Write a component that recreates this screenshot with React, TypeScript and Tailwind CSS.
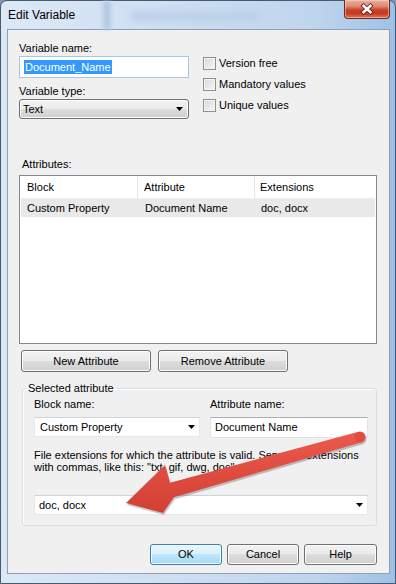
import React from "react";

const Arrow = () => (
  <svg width="7" height="4" viewBox="0 0 7 4" className="block">
    <polygon points="0,0 7,0 3.5,4" fill="#000" />
  </svg>
);

const Check = ({ label }: { label: string }) => (
  <div className="h-[21px] flex items-center">
    <div className="w-[13px] h-[13px] border border-[#8e8f8f] bg-[linear-gradient(135deg,#d8d8d8,#f7f7f7)] shadow-[inset_0_0_0_1px_#f4f4f4]" />
    <span className="ml-[3px]">{label}</span>
  </div>
);

const btn =
  "h-[22px] flex items-center justify-center rounded-[3px] border border-[#707070] bg-[linear-gradient(#f2f2f2,#ebebeb_50%,#dddddd_50%,#cfcfcf)] shadow-[inset_0_0_0_1px_#fcfcfc]";

export default function App() {
  return (
    <div className="w-[396px] h-[584px] relative overflow-hidden bg-[#7f98b8] font-['Liberation_Sans',Arial,sans-serif] text-[11px] text-black">
      <div className="w-full h-full rounded-t-[7px] border border-[#4a5a6e] bg-[linear-gradient(90deg,#dce8f6_0%,#cddff2_45%,#bfd5ee_80%,#9fc0e5_100%)] flex flex-col">
        <div className="h-[28px] relative flex items-center pl-[7px] shrink-0">
          <div className="absolute left-[102px] top-0 w-[8px] h-[28px] bg-[#b2c9e3] blur-[2px]" />
          <div className="absolute left-[130px] top-[10px] w-[130px] h-[11px] bg-[#bdd1e9] blur-[3px]" />
          <span className="relative text-[12px] leading-none text-black">Edit Variable</span>
          <div className="absolute right-[5px] top-[-1px] w-[46px] h-[19px] rounded-b-[4px] border border-t-0 border-[#6d2a1e] bg-[linear-gradient(#eab1a2,#de8a73_35%,#c8432b_55%,#c53a22_75%,#dc7a5c)] shadow-[inset_0_0_0_1px_rgba(255,220,200,0.5)] flex items-center justify-center">
            <svg width="14" height="12" viewBox="0 0 14 12">
              <path d="M2 1.5 L12 10.5 M12 1.5 L2 10.5" stroke="#5a1a10" strokeWidth="4.2" strokeLinecap="butt" />
              <path d="M2.6 2 L11.4 10 M11.4 2 L2.6 10" stroke="#ffffff" strokeWidth="2.6" strokeLinecap="butt" />
            </svg>
          </div>
        </div>
        <div className="flex-1 ml-[6px] mr-[5px] mb-[9px] border border-[#8ea0b8] bg-[#f0f0f0] pl-[11px] pr-[12px] pt-[11px] flex flex-col">
          <div className="flex">
            <div className="w-[170px] flex flex-col">
              <div className="h-[15px] leading-[15px]">Variable name:</div>
              <div className="h-[22px] border border-[#a9c6e4] bg-white flex items-center pl-[4px]">
                <span className="bg-[#3399ff] text-white leading-[14px] px-[1px]">Document_Name</span>
              </div>
              <div className="h-[15px] leading-[15px] mt-[6px]">Variable type:</div>
              <div className={btn.replace("h-[22px]", "h-[20px]") + " !justify-between pl-[3px] pr-[5px]"}>
                <span>Text</span>
                <Arrow />
              </div>
            </div>
            <div className="ml-[14px] pt-[12px] flex flex-col">
              <Check label="Version free" />
              <Check label="Mandatory values" />
              <Check label="Unique values" />
            </div>
          </div>

          <div className="h-[15px] leading-[15px] mt-[38px] ml-[3px]">Attributes:</div>
          <div className="mt-[3px] h-[169px] border border-[#828790] bg-white flex flex-col">
            <div className="h-[23px] flex border-b border-[#f0f0f0]">
              <div className="w-[118px] pl-[7px] flex items-center border-r border-[#e5e5e5]">Block</div>
              <div className="w-[117px] pl-[6px] flex items-center border-r border-[#e5e5e5]">Attribute</div>
              <div className="flex-1 pl-[5px] flex items-center">Extensions</div>
            </div>
            <div className="h-[18px] flex bg-[#e9e9e9] mx-[1px]">
              <div className="w-[117px] pl-[6px] flex items-center">Custom Property</div>
              <div className="w-[117px] pl-[7px] flex items-center">Document Name</div>
              <div className="flex-1 pl-[6px] flex items-center">doc, docx</div>
            </div>
          </div>

          <div className="flex mt-[6px] ml-[2px] gap-[7px]">
            <div className={btn + " w-[130px]"}>New Attribute</div>
            <div className={btn + " w-[130px]"}>Remove Attribute</div>
          </div>

          <fieldset className="mt-[9px] ml-[3px] border border-[#d5dfe5] rounded-[3px] shadow-[inset_1px_1px_0_#ffffff]">
            <legend className="ml-[3px] px-[2px] h-[15px] leading-[15px]">Selected attribute</legend>
            <div className="pl-[11px] pr-[8px] pt-[1px] pb-[10px] flex flex-col">
              <div className="flex gap-[10px]">
                <div className="w-[166px] flex flex-col">
                  <div className="h-[15px] leading-[15px]">Block name:</div>
                  <div className="mt-[5px] h-[20px] bg-white border border-[#e3e9ef] border-t-[#d0d4da] flex items-center justify-between pl-[5px] pr-[4px]">
                    <span>Custom Property</span>
                    <Arrow />
                  </div>
                </div>
                <div className="flex-1 flex flex-col">
                  <div className="h-[15px] leading-[15px]">Attribute name:</div>
                  <div className="mt-[5px] h-[21px] bg-white border border-[#e2e3ea] border-t-[#abadb3] flex items-center pl-[4px]">
                    Document Name
                  </div>
                </div>
              </div>
              <div className="mt-[11px] leading-[12px]">
                File extensions for which the attribute is valid. Separate extensions
                <br />
                with commas, like this: "txt, gif, dwg, doc".
              </div>
              <div className="mt-[22px] h-[20px] bg-white border border-[#e3e9ef] border-t-[#d0d4da] flex items-center justify-between pl-[4px] pr-[4px]">
                <span>doc, docx</span>
                <Arrow />
              </div>
            </div>
          </fieldset>

          <div className="flex justify-end gap-[5px] mt-[18px]">
            <div className="h-[21px] w-[72px] flex items-center justify-center rounded-[3px] border border-[#3c7fb1] bg-[linear-gradient(#eaf6fd,#d9f0fc_50%,#bee6fd_50%,#a7d9f5)] shadow-[inset_0_0_0_1px_#f3fbff]">OK</div>
            <div className={btn.replace("h-[22px]", "h-[21px]") + " w-[72px]"}>Cancel</div>
            <div className={btn.replace("h-[22px]", "h-[21px]") + " w-[73px]"}>Help</div>
          </div>
        </div>
      </div>

      <svg className="absolute inset-0 pointer-events-none" width="396" height="584" viewBox="0 0 396 584">
        <defs>
          <linearGradient id="ar" x1="0" y1="0" x2="0" y2="1">
            <stop offset="0" stopColor="#ec5a4c" />
            <stop offset="1" stopColor="#d23f33" />
          </linearGradient>
        </defs>
        <g opacity="0.22" transform="translate(1,2)">
          <polygon points="126,503 165,465 170,482.8 358.5,431.7 361.5,442.3 174,497.2 163,513" fill="#000" />
          <circle cx="360" cy="437" r="5.5" fill="#000" />
        </g>
        <polygon points="126,503 165,465 170,482.8 358.5,431.7 361.5,442.3 174,497.2 163,513" fill="url(#ar)" />
        <circle cx="360" cy="437" r="5.5" fill="#e24c3f" />
      </svg>
    </div>
  );
}
